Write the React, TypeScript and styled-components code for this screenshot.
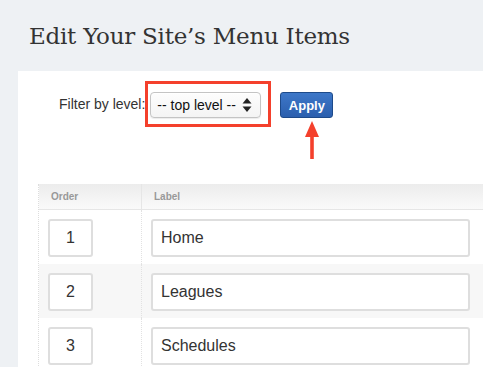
import styled, { createGlobalStyle } from 'styled-components'

const GlobalStyle = createGlobalStyle`
  html, body {
    margin: 0;
    padding: 0;
    background: #eef1f4;
    overflow: hidden;
  }
`

const items = [
  { order: 1, label: 'Home' },
  { order: 2, label: 'Leagues' },
  { order: 3, label: 'Schedules' },
]

export default function App() {
  return (
    <>
      <GlobalStyle />
      <Page>
        <Title>Edit Your Site’s Menu Items</Title>
        <Panel>
          <FilterRow>
            <FilterLabel>Filter by level:</FilterLabel>
            <Highlight>
              <Select>
                <span>-- top level --</span>
                <svg width="10" height="16" viewBox="0 0 10 16">
                  <path d="M5 1 L9.5 6.5 L0.5 6.5 Z" fill="#222" />
                  <path d="M5 15 L9.5 9.5 L0.5 9.5 Z" fill="#222" />
                </svg>
              </Select>
            </Highlight>
            <ApplyWrap>
              <ApplyButton>Apply</ApplyButton>
              <Arrow width="16" height="40" viewBox="0 0 16 40">
                <path d="M8 0 L15 16 L1 16 Z" fill="#f4402c" />
                <rect x="6.2" y="14" width="3.6" height="24" fill="#f4402c" />
              </Arrow>
            </ApplyWrap>
          </FilterRow>
          <Table>
            <HeadRow>
              <HeadCell $first>Order</HeadCell>
              <HeadCell>Label</HeadCell>
            </HeadRow>
            {items.map((item, i) => (
              <Row key={item.order} $shaded={i % 2 === 1}>
                <Cell $first>
                  <OrderInput>{item.order}</OrderInput>
                </Cell>
                <Cell>
                  <LabelInput>{item.label}</LabelInput>
                </Cell>
              </Row>
            ))}
          </Table>
        </Panel>
      </Page>
    </>
  )
}

const Page = styled.div`
  padding-left: 18px;
  height: 367px;
  display: flex;
  flex-direction: column;
`

const Title = styled.h1`
  margin: 0;
  padding: 23px 0 0 11px;
  height: 71px;
  flex: none;
  box-sizing: border-box;
  font-family: 'DejaVu Serif', Georgia, serif;
  font-weight: normal;
  font-size: 23px;
  color: #333;
  letter-spacing: -0.25px;
  white-space: nowrap;
`

const Panel = styled.div`
  flex: 1;
  background: #fff;
  padding: 10px 0 0 20px;
  overflow: hidden;
`

const FilterRow = styled.div`
  display: flex;
  align-items: center;
  padding-left: 21px;
  height: 46px;
  font-family: 'Liberation Sans', Arial, sans-serif;
`

const FilterLabel = styled.span`
  font-size: 14px;
  color: #333;
  margin-right: 0;
`

const Highlight = styled.div`
  border: 3px solid #f4402c;
  padding: 8px 7px 6px 2px;
`

const Select = styled.div`
  width: 111px;
  height: 26px;
  box-sizing: border-box;
  border: 1px solid #c4c4c4;
  border-radius: 4px;
  box-shadow: inset 0 1px 0 #fff, 0 1px 1px rgba(0, 0, 0, 0.08);
  background: linear-gradient(#fdfdfd, #f4f4f4);
  display: flex;
  align-items: center;
  justify-content: space-between;
  padding: 0 8px 0 6px;
  font-size: 14px;
  color: #111;
`

const ApplyWrap = styled.div`
  position: relative;
  margin-left: 9px;
  margin-top: 2px;
`

const ApplyButton = styled.div`
  width: 53px;
  height: 26px;
  box-sizing: border-box;
  border: 1px solid #1d4a8a;
  border-radius: 3px;
  background: linear-gradient(#3d77c8, #2b5fae);
  color: #fff;
  font-weight: bold;
  font-size: 13px;
  display: flex;
  align-items: center;
  justify-content: center;
`

const Arrow = styled.svg`
  position: absolute;
  left: 24px;
  top: 29px;
`

const Table = styled.div`
  margin-top: 57px;
  border-left: 1px dotted #ddd;
`

const HeadRow = styled.div`
  display: flex;
  height: 25px;
  background: linear-gradient(#ececec, #fafafa);
  border-bottom: 1px solid #e6e6e6;
`

const HeadCell = styled.div<{ $first?: boolean }>`
  width: ${(p) => (p.$first ? '103px' : 'auto')};
  flex: ${(p) => (p.$first ? 'none' : '1')};
  box-sizing: border-box;
  padding-left: 12px;
  border-right: ${(p) => (p.$first ? '1px solid #e6e6e6' : 'none')};
  display: flex;
  align-items: center;
  font-family: 'Liberation Sans', Arial, sans-serif;
  font-weight: bold;
  font-size: 10px;
  color: #999;
`

const Row = styled.div<{ $shaded: boolean }>`
  display: flex;
  height: 54px;
  background: ${(p) => (p.$shaded ? '#f7f7f7' : '#fff')};
`

const Cell = styled.div<{ $first?: boolean }>`
  width: ${(p) => (p.$first ? '103px' : 'auto')};
  flex: ${(p) => (p.$first ? 'none' : '1')};
  box-sizing: border-box;
  padding: 9px 0 0 9px;
  border-right: ${(p) => (p.$first ? '1px dotted #e2e2e2' : 'none')};
`

const Field = styled.div`
  height: 38px;
  box-sizing: border-box;
  border: 2px solid #dedede;
  border-radius: 3px;
  background: #fff;
  display: flex;
  align-items: center;
  font-family: 'Liberation Sans', Arial, sans-serif;
  font-size: 16px;
  color: #333;
`

const OrderInput = styled(Field)`
  width: 45px;
  justify-content: center;
`

const LabelInput = styled(Field)`
  width: 319px;
  padding-left: 8px;
`
